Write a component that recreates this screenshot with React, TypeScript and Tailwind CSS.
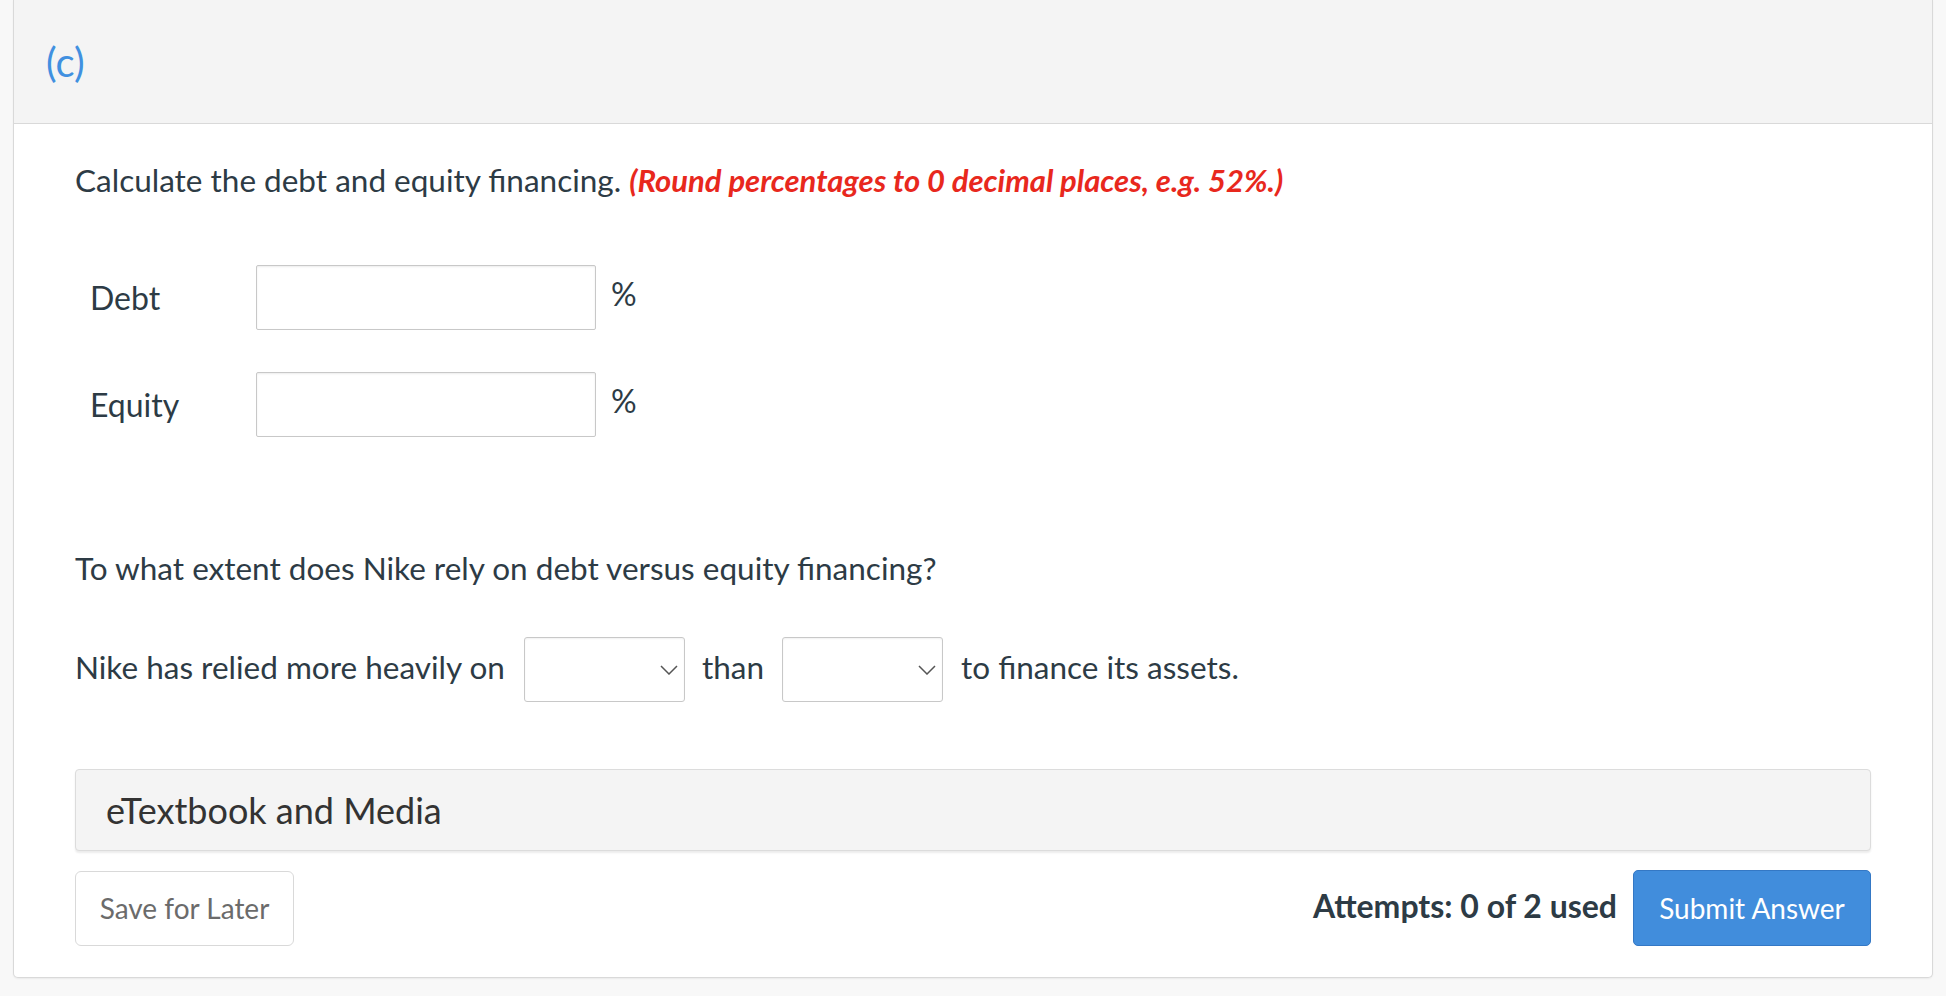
const Chevron = () => (
  <svg width="18" height="10" viewBox="0 0 18 10" fill="none">
    <polyline points="1,1 9,9 17,1" stroke="#555" strokeWidth="1.5" />
  </svg>
);

const Select = () => (
  <div className="flex h-[65px] w-[161px] items-center justify-end rounded-[3px] border border-[#c8c8c8] bg-white pr-[6px] shadow-[inset_0_1px_2px_rgba(0,0,0,0.06)]">
    <Chevron />
  </div>
);

const AmountRow = ({ label }: { label: string }) => (
  <div className="flex items-center pl-[15px]">
    <div className="w-[166px] text-[32px]">{label}</div>
    <div className="h-[65px] w-[340px] rounded-[2px] border border-[#c8c8c8] bg-white shadow-[inset_0_1px_2px_rgba(0,0,0,0.08)]" />
    <div className="ml-[15px] -mt-[8px] text-[32px]">%</div>
  </div>
);

export default function App() {
  return (
    <div
      className="min-h-[996px] bg-[#f8f8f8] px-[13px] text-[#2d3b45]"
      style={{ fontFamily: "Lato, 'Open Sans', sans-serif" }}
    >
      <div className="rounded-b-[5px] border border-t-0 border-[#d9d9d9] bg-white shadow-[0_1px_2px_rgba(0,0,0,0.06)]">
        <div className="flex h-[124px] items-center border-b border-[#d9d9d9] bg-[#f4f4f4] pl-[32px]">
          <span className="text-[40px] text-[#4190e0]">(c)</span>
        </div>

        <div className="px-[61px] pb-[31px]">
          <p className="pt-[34px] text-[31.5px] leading-[44px]">
            Calculate the debt and equity financing.{" "}
            <span className="text-[31px] font-bold italic text-[#e8281d]">
              (Round percentages to 0 decimal places, e.g. 52%.)
            </span>
          </p>

          <div className="mt-[63px] flex flex-col gap-[42px]">
            <AmountRow label="Debt" />
            <AmountRow label="Equity" />
          </div>

          <p className="mt-[109px] text-[31.5px] leading-[44px]">
            To what extent does Nike rely on debt versus equity financing?
          </p>

          <div className="mt-[47px] flex items-center text-[31.5px]">
            <span className="-mt-[4px]">Nike has relied more heavily on</span>
            <div className="ml-[19px]">
              <Select />
            </div>
            <span className="-mt-[4px] ml-[17px] mr-[18px]">than</span>
            <Select />
            <span className="-mt-[4px] ml-[18px]">to finance its assets.</span>
          </div>

          <div className="mt-[67px] flex h-[82px] items-center rounded-[4px] border border-[#dcdcdc] bg-[#f4f4f4] pl-[30px] shadow-[0_2px_2px_rgba(0,0,0,0.08)]">
            <span className="text-[36px] text-[#333]">eTextbook and Media</span>
          </div>

          <div className="mt-[19px] flex items-center">
            <button className="h-[75px] w-[219px] rounded-[6px] border border-[#d9d9d9] bg-white text-[28px] text-[#6b6b6b]">
              Save for Later
            </button>
            <div className="ml-auto flex items-center">
              <span className="-mt-[4px] text-[32px] font-bold">Attempts: 0 of 2 used</span>
              <button className="ml-[16px] h-[76px] w-[238px] rounded-[5px] border border-[#3478c5] bg-[#418ddc] text-[28px] text-white">
                Submit Answer
              </button>
            </div>
          </div>
        </div>
      </div>
    </div>
  );
}
